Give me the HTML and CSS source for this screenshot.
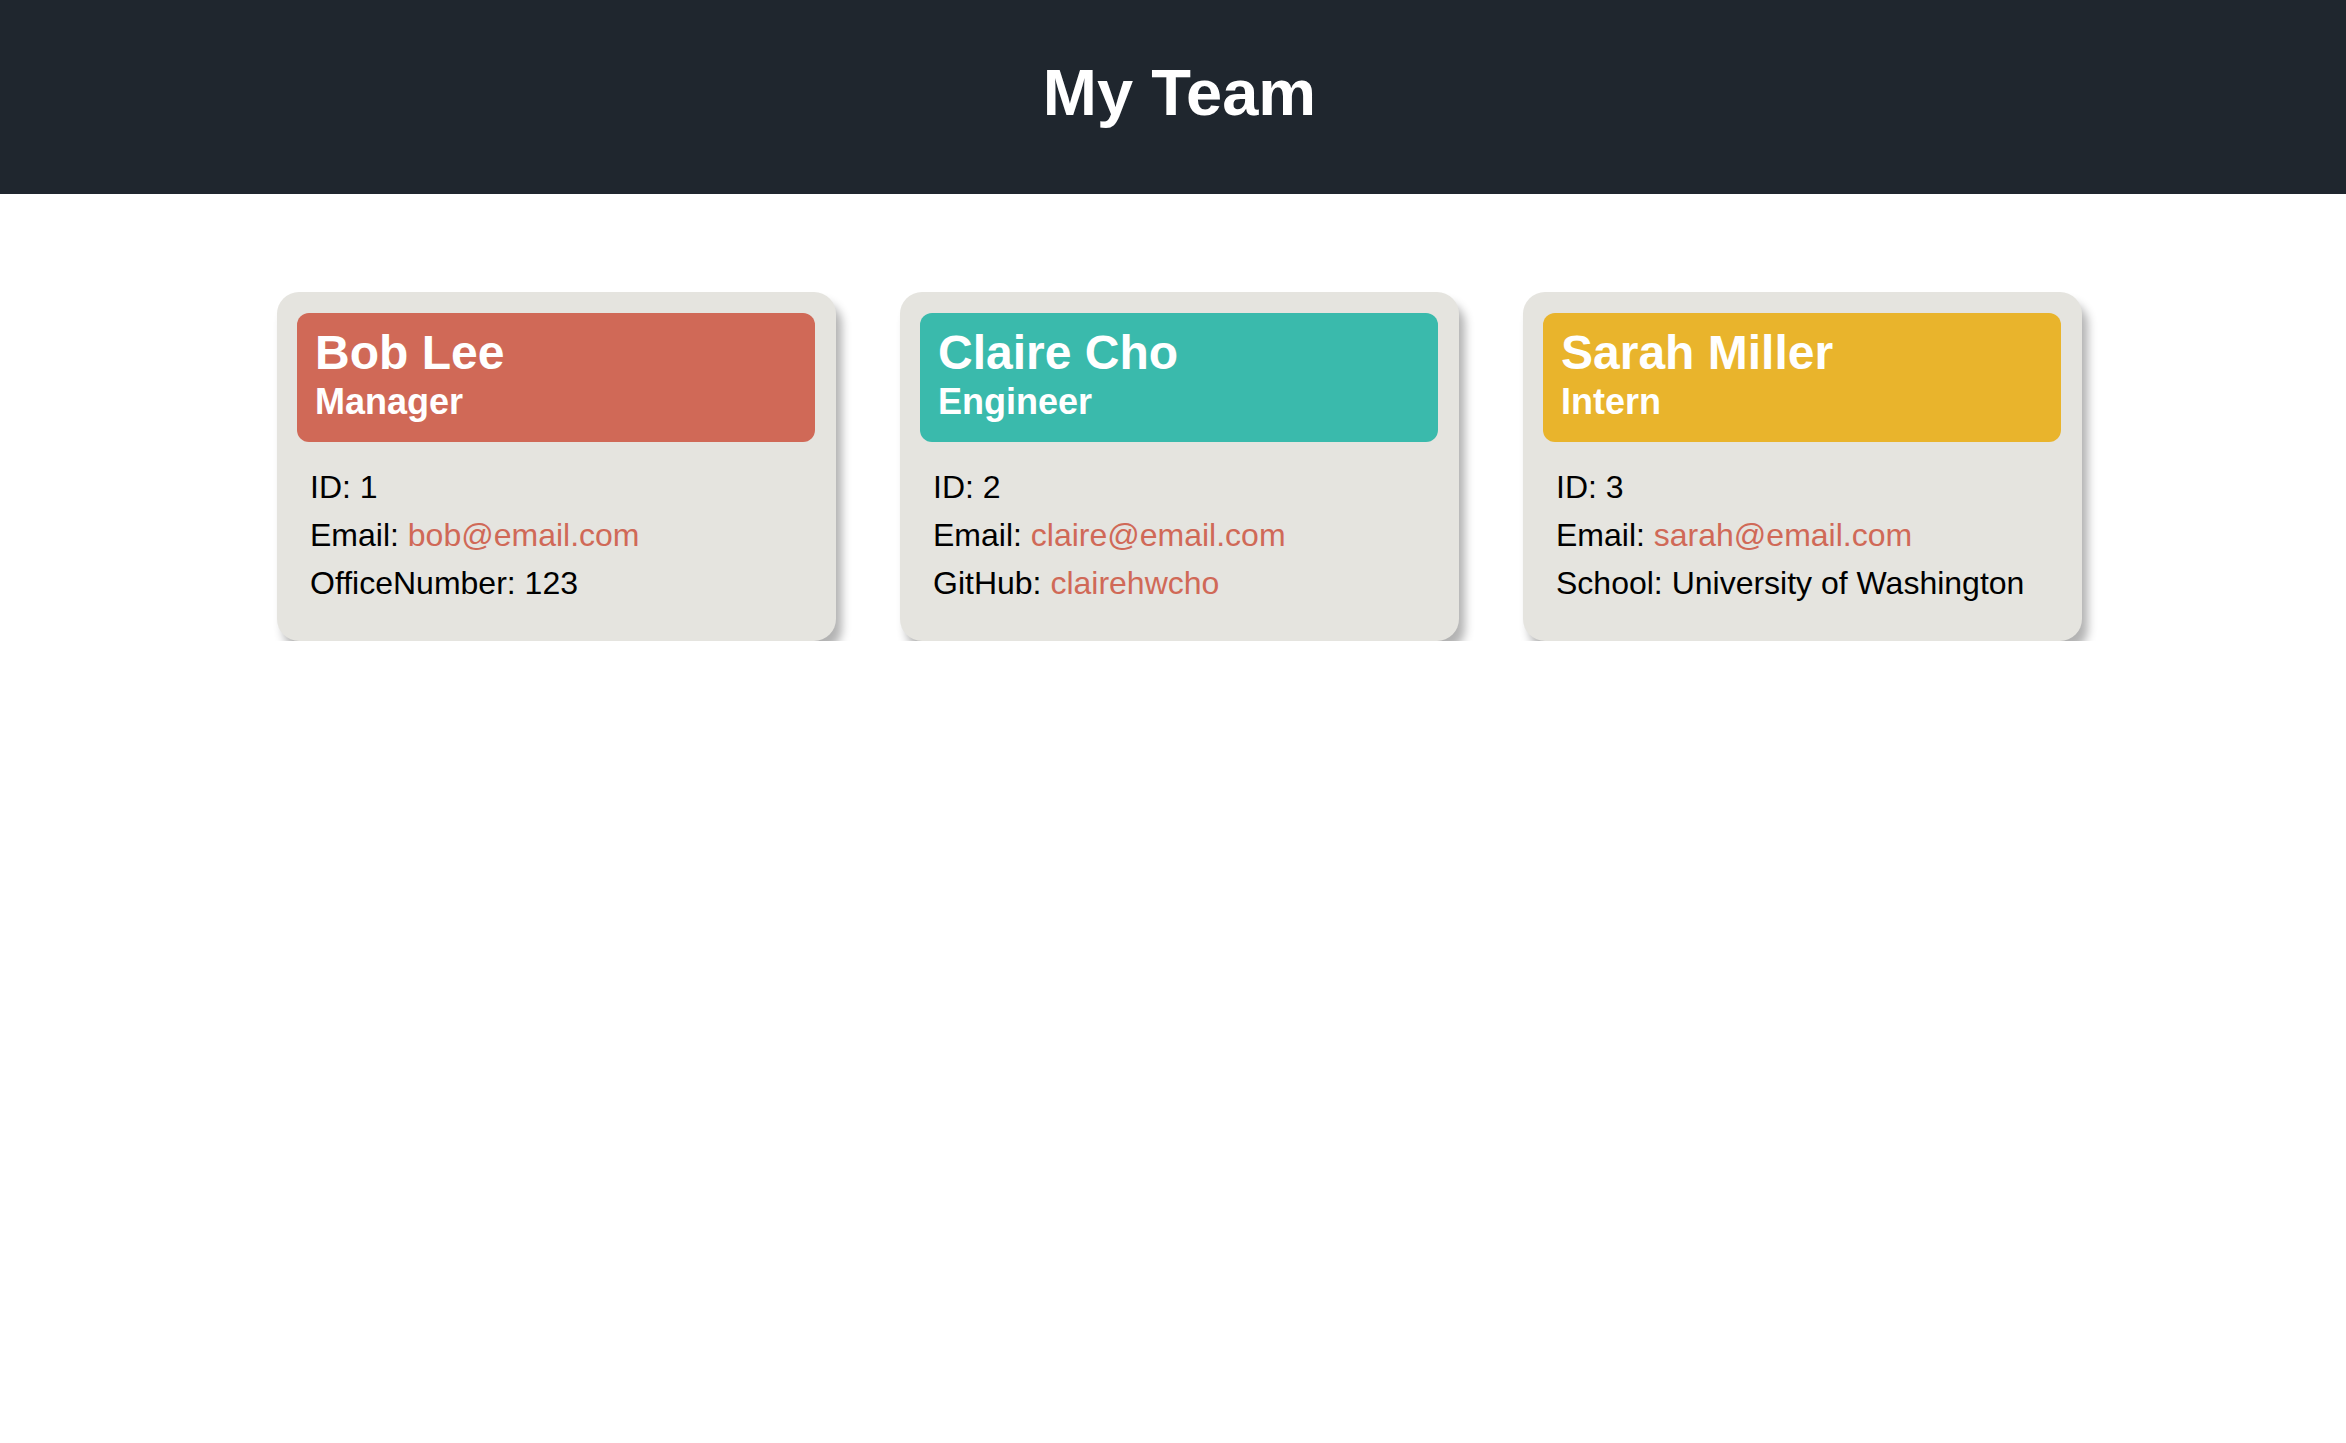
FILE: index.html
```html
<!DOCTYPE html>
<html lang="en">
<head>
<meta charset="UTF-8">
<title>My Team</title>
<link rel="stylesheet" href="styles.css">
</head>
<body>
<header class="top">
  <h1 class="title">My Team</h1>
</header>
<main class="team">
  <section class="card">
    <div class="card-head manager">
      <h2 class="name">Bob Lee</h2>
      <h3 class="role">Manager</h3>
    </div>
    <ul class="info">
      <li>ID: 1</li>
      <li>Email: <a href="#">bob@email.com</a></li>
      <li>OfficeNumber: 123</li>
    </ul>
  </section>
  <section class="card">
    <div class="card-head engineer">
      <h2 class="name">Claire Cho</h2>
      <h3 class="role">Engineer</h3>
    </div>
    <ul class="info">
      <li>ID: 2</li>
      <li>Email: <a href="#">claire@email.com</a></li>
      <li>GitHub: <a href="#">clairehwcho</a></li>
    </ul>
  </section>
  <section class="card">
    <div class="card-head intern">
      <h2 class="name">Sarah Miller</h2>
      <h3 class="role">Intern</h3>
    </div>
    <ul class="info">
      <li>ID: 3</li>
      <li>Email: <a href="#">sarah@email.com</a></li>
      <li>School: University of Washington</li>
    </ul>
  </section>
</main>
</body>
</html>
```
FILE: styles.css
```css
* { box-sizing: border-box; }

body {
  margin: 0;
  background: #ffffff;
  font-family: "Liberation Sans", Arial, sans-serif;
  color: #000000;
}

.top {
  height: 194px;
  background: #1f262e;
  padding: 57px 0 0 13px;
}

.title {
  margin: 0;
  text-align: center;
  color: #ffffff;
  font-size: 65px;
  font-weight: 700;
  line-height: 72px;
}

.team {
  display: flex;
  gap: 64px;
  padding: 98px 0 0 277px;
}

.card {
  width: 559px;
  background: #e5e4df;
  border-radius: 22px;
  padding: 21px 21px 34px 20px;
  box-shadow: 6px 10px 10px rgba(0, 0, 0, 0.3);
}

.card-head {
  height: 129px;
  border-radius: 12px;
  padding: 12px 19px 19px 18px;
  color: #ffffff;
}

.manager { background: #d06957; }
.engineer { background: #3abaac; }
.intern { background: #e9b42c; }

.name {
  margin: 0;
  font-size: 48px;
  font-weight: 700;
  line-height: 56px;
}

.role {
  margin: 0;
  font-size: 36px;
  font-weight: 700;
  line-height: 42px;
}

.info {
  list-style: none;
  margin: 0;
  padding: 21px 0 0 13px;
  font-size: 32px;
  line-height: 48px;
}

.info a {
  color: #d06957;
  text-decoration: none;
}
```
